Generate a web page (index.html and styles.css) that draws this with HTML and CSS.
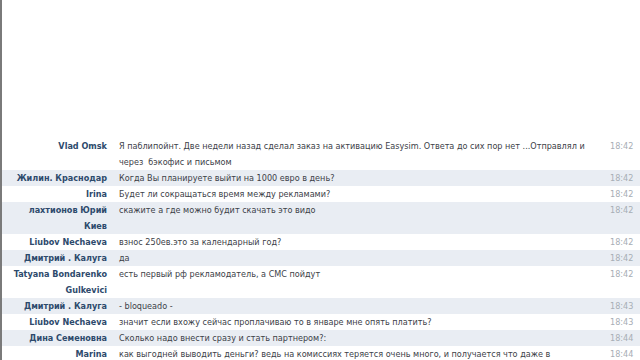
FILE: index.html
```html
<!DOCTYPE html>
<html lang="ru">
<head>
    <meta charset="UTF-8" />
    <meta name="viewport" content="width=device-width, initial-scale=1" />
    <title>Чат</title>
    <link rel="stylesheet" href="styles.css">
</head>
<body>
    <div class="chat">
        <div class="chat-empty"></div>

        <div class="chat-log">
            <div class="msg">
                <div class="author">Vlad Omsk</div>
                <div class="text">Я паблипойнт. Две недели назад сделал заказ на активацию Easysim. Ответа до сих пор нет ...Отправлял и через&nbsp; бэкофис и письмом</div>
                <div class="time">18:42</div>
            </div>
            <div class="msg alt">
                <div class="author">Жилин. Краснодар</div>
                <div class="text">Когда Вы планируете выйти на 1000 евро в день?</div>
                <div class="time">18:42</div>
            </div>
            <div class="msg">
                <div class="author">Irina</div>
                <div class="text">Будет ли сокращаться время между рекламами?</div>
                <div class="time">18:42</div>
            </div>
            <div class="msg alt">
                <div class="author">лахтионов Юрий Киев</div>
                <div class="text">скажите а где можно будит скачать это видо</div>
                <div class="time">18:42</div>
            </div>
            <div class="msg">
                <div class="author">Liubov Nechaeva</div>
                <div class="text">взнос 250ев.это за календарный год?</div>
                <div class="time">18:42</div>
            </div>
            <div class="msg alt">
                <div class="author">Дмитрий . Калуга</div>
                <div class="text">да</div>
                <div class="time">18:42</div>
            </div>
            <div class="msg">
                <div class="author">Tatyana Bondarenko Gulkevici</div>
                <div class="text">есть первый рф рекламодатель, а СМС пойдут</div>
                <div class="time">18:42</div>
            </div>
            <div class="msg alt">
                <div class="author">Дмитрий . Калуга</div>
                <div class="text">- bloqueado -</div>
                <div class="time">18:43</div>
            </div>
            <div class="msg">
                <div class="author">Liubov Nechaeva</div>
                <div class="text">значит если вхожу сейчас проплачиваю то в январе мне опять платить?</div>
                <div class="time">18:43</div>
            </div>
            <div class="msg alt">
                <div class="author">Дина Семеновна</div>
                <div class="text">Сколько надо внести сразу и стать партнером?:</div>
                <div class="time">18:44</div>
            </div>
            <div class="msg">
                <div class="author">Marina</div>
                <div class="text">как выгодней выводить деньги? ведь на комиссиях теряется очень много, и получается что даже в</div>
                <div class="time">18:44</div>
            </div>
        </div>
    </div>
</body>
</html>
```

FILE: styles.css
```css
html, body {
    margin: 0;
    padding: 0;
    background-color: #fff;
    height: 100%;
    overflow: hidden;
}
body {
    font-family: 'DejaVu Sans Condensed', 'DejaVu Sans', sans-serif;
    font-size: 9px;
    color: #3a3f47;
}
.chat {
    border-left: 2px solid #7a7a7a;
    height: 100%;
}
.chat-empty {
    height: 138px;
}
.msg {
    display: grid;
    grid-template-columns: 105px 1fr 30px;
    column-gap: 12px;
    line-height: 16px;
}
.msg.alt {
    background-color: #e9edf3;
}
.author {
    padding-left: 10px;
    text-align: right;
    font-weight: bold;
    color: #2d4a6c;
}
.text {
    color: #3c4148;
}
.time {
    color: #a7adb5;
}
```
